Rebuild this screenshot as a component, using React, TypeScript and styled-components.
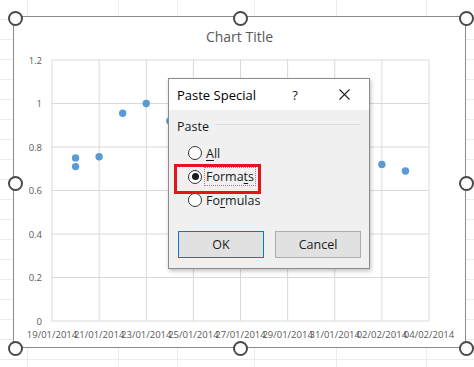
import React from 'react';
import styled, {createGlobalStyle} from 'styled-components';

const GlobalStyle = createGlobalStyle`
    html, body {
        margin: 0;
        padding: 0;
        background: #ffffff;
        font-family: "Open Sans", "Noto Sans", sans-serif;
    }
`;

// plot area inside the svg (svg starts at frame x=13, y=54 on the page)
const PLOT = {left: 38, right: 415, top: 6, bottom: 267};
const yTicks = [0, 0.2, 0.4, 0.6, 0.8, 1, 1.2];
const xLabels = [
    '19/01/2014', '21/01/2014', '23/01/2014', '25/01/2014', '27/01/2014',
    '29/01/2014', '31/01/2014', '02/02/2014', '04/02/2014',
];

// day offset from 19/01 and value
const points: [number, number][] = [
    [1, 0.75], [1, 0.71], [2, 0.755], [3, 0.955], [4, 1.0], [5, 0.92],
    [14, 0.72], [15, 0.69],
];

const dayW = (PLOT.right - PLOT.left) / 16;
const toY = (v: number) => PLOT.bottom - (v / 1.2) * (PLOT.bottom - PLOT.top);

const radios = [
    {label: 'All', key: 0, checked: false},
    {label: 'Formats', key: 5, checked: true},
    {label: 'Formulas', key: 2, checked: false},
];

const App = () => {
    return (
        <Sheet>
            <GlobalStyle/>
            <ChartFrame>
                <Handle $x="0%" $y="0%"/>
                <Handle $x="50%" $y="0%"/>
                <Handle $x="100%" $y="0%"/>
                <Handle $x="0%" $y="50%"/>
                <Handle $x="100%" $y="50%"/>
                <Handle $x="0%" $y="100%"/>
                <Handle $x="50%" $y="100%"/>
                <Handle $x="100%" $y="100%"/>

                <ChartTitle>Chart Title</ChartTitle>
                <Plot width={452} height={293} viewBox="0 0 452 293">
                    {yTicks.map((t) => (
                        <g key={t}>
                            <line x1={PLOT.left} x2={PLOT.right} y1={toY(t)} y2={toY(t)}
                                  stroke="#d9d9d9" strokeWidth={1}/>
                            <text x={28} y={toY(t) + 3.5} textAnchor="end" fontSize={9.5} fill="#595959">
                                {t}
                            </text>
                        </g>
                    ))}
                    {xLabels.map((l, i) => (
                        <g key={l}>
                            <line x1={PLOT.left + i * dayW * 2} x2={PLOT.left + i * dayW * 2}
                                  y1={PLOT.top} y2={PLOT.bottom} stroke="#d9d9d9" strokeWidth={1}/>
                            <text x={PLOT.left + i * dayW * 2} y={283.5} textAnchor="middle" fontSize={9.5}
                                  fill="#595959">
                                {l}
                            </text>
                        </g>
                    ))}
                    {points.map(([d, v], i) => (
                        <circle key={i} cx={PLOT.left + d * dayW} cy={toY(v)} r={3.7} fill="#5b9bd5"/>
                    ))}
                </Plot>

                <Dialog>
                    <TitleBar>
                        <DialogTitle>Paste Special</DialogTitle>
                        <TitleButton $w={48}>?</TitleButton>
                        <TitleButton $w={50}>
                            <svg width="11" height="11" viewBox="0 0 11 11">
                                <path d="M0.5 0.5 L10.5 10.5 M10.5 0.5 L0.5 10.5" stroke="#222" strokeWidth="1.1"/>
                            </svg>
                        </TitleButton>
                    </TitleBar>
                    <DialogBody>
                        <GroupHeader>
                            <span>Paste</span>
                            <GroupRule/>
                        </GroupHeader>
                        <RadioList>
                            {radios.map((r) => (
                                <RadioRow key={r.label}>
                                    <RadioCircle $checked={r.checked}/>
                                    <RadioLabel $focused={r.checked}>
                                        {r.label.slice(0, r.key)}
                                        <u>{r.label.charAt(r.key)}</u>
                                        {r.label.slice(r.key + 1)}
                                    </RadioLabel>
                                </RadioRow>
                            ))}
                            <Highlight/>
                        </RadioList>
                        <ButtonRow>
                            <DialogButton $primary>OK</DialogButton>
                            <DialogButton>Cancel</DialogButton>
                        </ButtonRow>
                    </DialogBody>
                </Dialog>
            </ChartFrame>
        </Sheet>
    );
};

const Sheet = styled.div`
    width: 474px;
    height: 367px;
    box-sizing: border-box;
    padding: 16px 0 0 13px;
    overflow: hidden;
    background-color: #ffffff;
    background-image: repeating-linear-gradient(to bottom, transparent 0, transparent 19px, #ececec 19px, #ececec 20px),
    linear-gradient(to right, transparent 27px, #ececec 27px, #ececec 28px, transparent 28px,
    transparent 118px, #ececec 118px, #ececec 119px, transparent 119px,
    transparent 177px, #ececec 177px, #ececec 178px, transparent 178px,
    transparent 254px, #ececec 254px, #ececec 255px, transparent 255px,
    transparent 336px, #ececec 336px, #ececec 337px, transparent 337px,
    transparent 426px, #ececec 426px, #ececec 427px, transparent 427px);
`;

const ChartFrame = styled.div`
    position: relative;
    width: 453px;
    height: 332px;
    box-sizing: border-box;
    border: 1.5px solid #8a8a8a;
    background: #ffffff;
    display: flex;
    flex-direction: column;
`;

const Handle = styled.div<{ $x: string; $y: string }>`
    position: absolute;
    left: ${(p) => p.$x};
    top: ${(p) => p.$y};
    width: 11px;
    height: 11px;
    margin: -6.5px 0 0 -6.5px;
    border: 2px solid #4a4a4a;
    border-radius: 50%;
    background: #ffffff;
    z-index: 2;
`;

const ChartTitle = styled.div`
    height: 37px;
    padding-top: 1px;
    box-sizing: border-box;
    display: flex;
    align-items: center;
    justify-content: center;
    font-size: 14px;
    color: #595959;
`;

const Plot = styled.svg`
    display: block;
    font-family: "Open Sans", "Noto Sans", sans-serif;
`;

const Dialog = styled.div`
    position: absolute;
    left: 154px;
    top: 61px;
    width: 202px;
    height: 191px;
    box-sizing: border-box;
    border: 1px solid #8c8c8c;
    background: #f0f0f0;
    box-shadow: 1px 2px 4px rgba(0, 0, 0, 0.25);
    display: flex;
    flex-direction: column;
    font-size: 12.5px;
    color: #1a1a1a;
    z-index: 3;
`;

const TitleBar = styled.div`
    height: 31px;
    background: #ffffff;
    display: flex;
    align-items: center;
    padding-left: 8px;
`;

const DialogTitle = styled.div`
    flex: 1;
    font-size: 13px;
    color: #000;
`;

const TitleButton = styled.div<{ $w: number }>`
    width: ${(p) => p.$w}px;
    display: flex;
    justify-content: center;
    align-items: center;
    font-size: 13px;
    color: #222;
`;

const DialogBody = styled.div`
    flex: 1;
    display: flex;
    flex-direction: column;
    padding: 6px 8px 0 8px;
`;

const GroupHeader = styled.div`
    display: flex;
    align-items: center;
    gap: 6px;
    height: 21px;
`;

const GroupRule = styled.div`
    flex: 1;
    height: 1px;
    margin-top: -4px;
    background: #dedede;
`;

const RadioList = styled.div`
    position: relative;
    display: flex;
    flex-direction: column;
    gap: 3.5px;
    padding: 6px 0 0 11px;
    height: 94px;
    box-sizing: border-box;
`;

const RadioRow = styled.div`
    display: flex;
    align-items: center;
    gap: 2px;
    height: 20px;
`;

const RadioCircle = styled.div<{ $checked: boolean }>`
    width: 14px;
    height: 14px;
    box-sizing: border-box;
    border: 1px solid #333;
    border-radius: 50%;
    background: #ffffff;
    display: flex;
    align-items: center;
    justify-content: center;

    &::after {
        content: '';
        display: ${(p) => (p.$checked ? 'block' : 'none')};
        width: 7px;
        height: 7px;
        border-radius: 50%;
        background: #1a1a1a;
    }
`;

const RadioLabel = styled.span<{ $focused: boolean }>`
    padding: 1px 1px;
    border: 1px dotted ${(p) => (p.$focused ? '#8a8a8a' : 'transparent')};
    line-height: 15px;

    u {
        text-underline-offset: 2px;
    }
`;

const Highlight = styled.div`
    position: absolute;
    left: -3px;
    top: 27px;
    width: 81px;
    height: 24px;
    border: 3.5px solid #e3141b;
    pointer-events: none;
`;

const ButtonRow = styled.div`
    display: flex;
    gap: 11px;
    padding-left: 1px;
`;

const DialogButton = styled.div<{ $primary?: boolean }>`
    width: 86px;
    height: 27px;
    box-sizing: border-box;
    display: flex;
    align-items: center;
    justify-content: center;
    background: #e1e1e1;
    border: 1px solid ${(p) => (p.$primary ? '#0a78d4' : '#adadad')};
    font-size: 12.5px;
    color: #1a1a1a;
`;

export default App;
